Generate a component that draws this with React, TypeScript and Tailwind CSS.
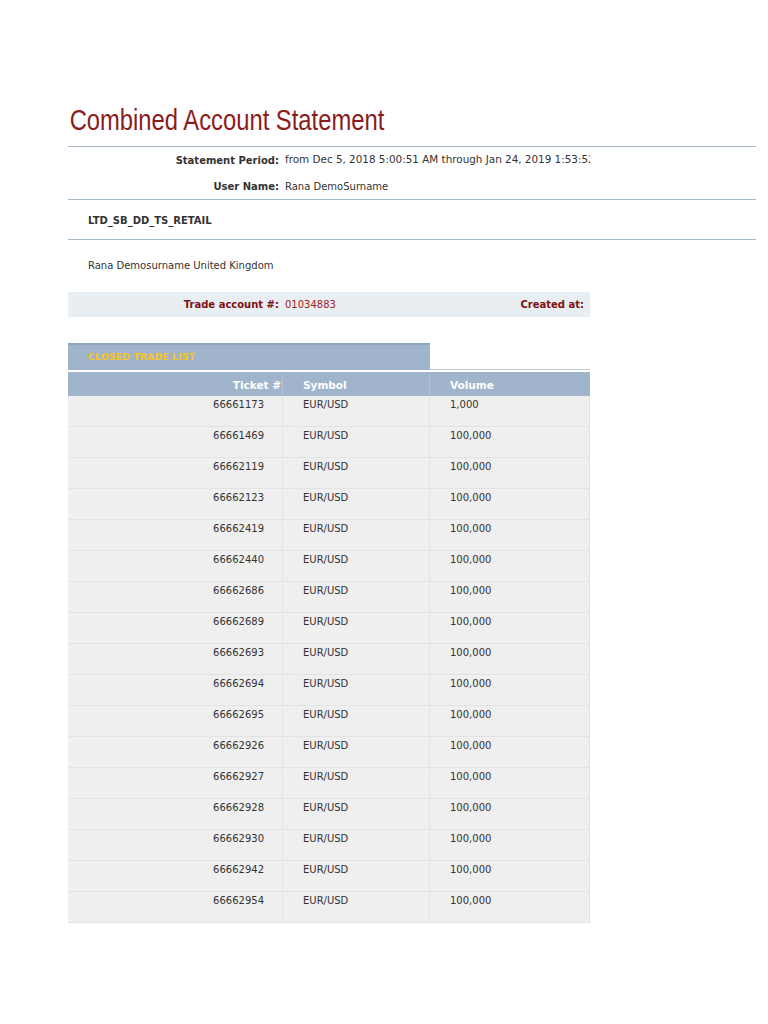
import React from 'react';

const tickets = [
  ['66661173', '1,000'],
  ['66661469', '100,000'],
  ['66662119', '100,000'],
  ['66662123', '100,000'],
  ['66662419', '100,000'],
  ['66662440', '100,000'],
  ['66662686', '100,000'],
  ['66662689', '100,000'],
  ['66662693', '100,000'],
  ['66662694', '100,000'],
  ['66662695', '100,000'],
  ['66662926', '100,000'],
  ['66662927', '100,000'],
  ['66662928', '100,000'],
  ['66662930', '100,000'],
  ['66662942', '100,000'],
  ['66662954', '100,000'],
];

const body = "font-['DejaVu_Sans',Verdana,sans-serif]";

export default function App() {
  return (
    <div className={`min-h-[1024px] bg-white text-[10px] text-[#333] ${body}`}>
      <div className="ml-[68px] w-[688px] pt-[106px]">
        <h1 className="h-[29px] origin-left scale-x-[0.82] whitespace-nowrap pl-[2px] text-[29px] leading-[29px] text-[#8b1c1c] font-['Liberation_Sans',Arial,sans-serif]">
          Combined Account Statement
        </h1>

        <div className="mt-[11px] border-t border-[#a9b9cd]" />
        <div className="w-[522px] overflow-hidden pt-[5px] pb-[5px]">
          <div className="flex h-[16px] items-center whitespace-nowrap">
            <span className="w-[211px] shrink-0 text-right font-bold">Statement Period:</span>
            <span className="pl-[6px] text-[10.4px]">from Dec 5, 2018 5:00:51 AM through Jan 24, 2019 1:53:52 PM</span>
          </div>
          <div className="mt-[10px] flex h-[16px] items-center whitespace-nowrap">
            <span className="w-[211px] shrink-0 text-right font-bold">User Name:</span>
            <span className="pl-[6px]">Rana DemoSurname</span>
          </div>
        </div>

        <div className="border-t border-[#a9b9cd]" />
        <div className="flex h-[39px] items-center pl-[20px] pt-[1px] font-bold">LTD_SB_DD_TS_RETAIL</div>
        <div className="border-t border-[#a9b9cd]" />

        <div className="mt-[18px] h-[16px] pl-[20px] leading-[16px]">Rana Demosurname United Kingdom</div>

        <div className="mt-[18px] flex h-[25px] w-[522px] items-center whitespace-nowrap bg-[#e9eef3]">
          <span className="w-[211px] shrink-0 text-right font-bold text-[#7d1010]">Trade account #:</span>
          <span className="pl-[6px] text-[#a11a1a]">01034883</span>
          <span className="ml-auto pr-[6px] font-bold text-[#7d1010]">Created at:</span>
        </div>

        <div className="mt-[26px] w-[522px]">
          <div className="flex h-[27px]">
            <div className="flex w-[362px] items-center border-t-2 border-[#8ea4bf] bg-[#a0b4cc] pl-[20px] text-[9.5px] font-bold uppercase text-[#f7c51e]">
              Closed Trade List
            </div>
            <div className="flex-1 border-b border-[#bcc9d8]" />
          </div>
          <div className="mt-[2px] flex h-[24px] items-center bg-[#a0b4cc] pt-[3px] text-[10.5px] font-bold text-white">
            <div className="flex h-full w-[215px] items-center justify-end border-r border-[#b6c5d7] pr-[1px]">Ticket #</div>
            <div className="flex h-full w-[147px] items-center border-r border-[#b6c5d7] pl-[20px]">Symbol</div>
            <div className="flex h-full flex-1 items-center pl-[20px]">Volume</div>
          </div>
          <div className="border-r border-[#e2e2e2]">
            {tickets.map(([id, vol]) => (
              <div key={id} className="flex h-[31px] border-b border-[#e3e3e3] bg-[#efefef] pt-[2px] leading-[14px]">
                <div className="w-[215px] border-r border-[#e3e3e3] pr-[18px] text-right">{id}</div>
                <div className="w-[147px] border-r border-[#e3e3e3] pl-[20px]">EUR/USD</div>
                <div className="flex-1 pl-[20px]">{vol}</div>
              </div>
            ))}
          </div>
        </div>
      </div>
    </div>
  );
}
